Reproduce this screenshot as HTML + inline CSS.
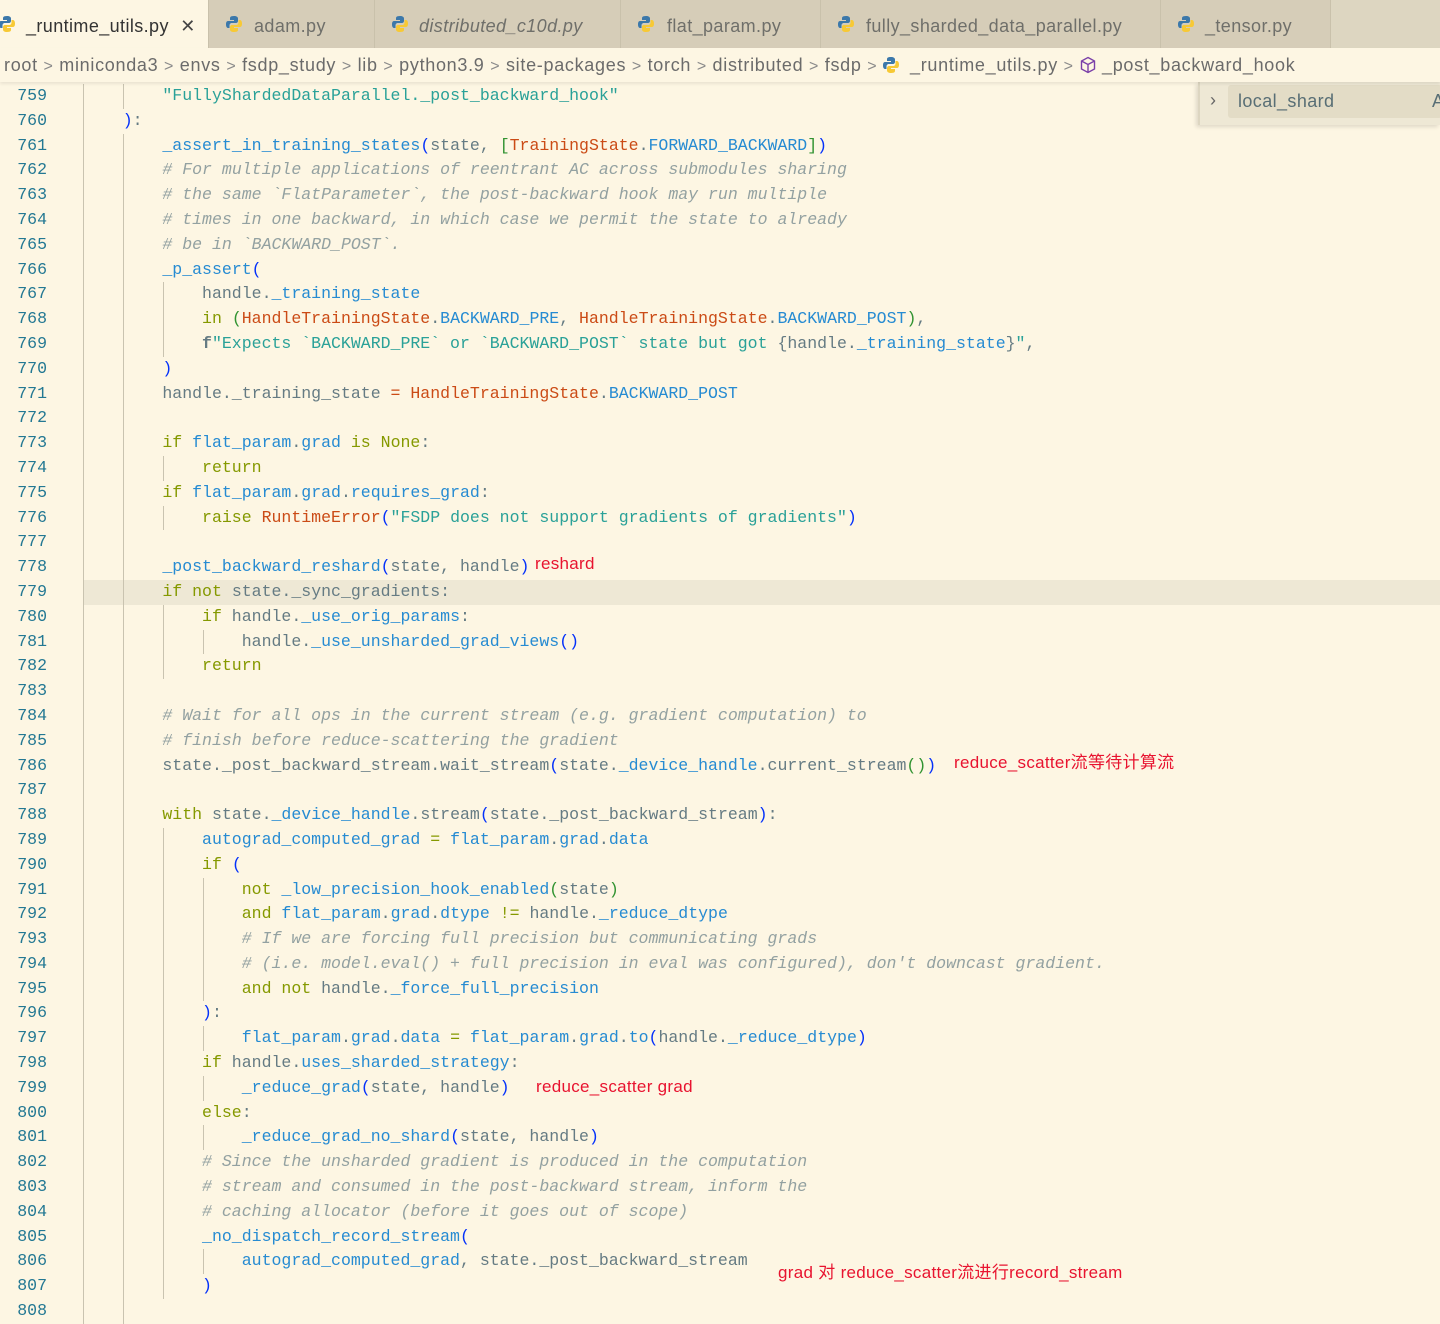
<!DOCTYPE html>
<html><head><meta charset="utf-8"><style>
*{margin:0;padding:0;box-sizing:border-box}
body{width:1440px;height:1308px;overflow:hidden;background:#fdf6e3;font-family:"Liberation Sans","Noto Sans CJK SC",sans-serif;position:relative}
.tabs{position:absolute;left:0;top:0;width:1440px;height:48px;background:#ddd6c1}
.tab{position:absolute;top:0;height:48px;background:#d6cdb8;border-right:1px solid #c9c1ab;font-size:18px;color:#6f6f6a;line-height:52px;padding-left:54px;letter-spacing:0.4px;white-space:nowrap}
.tab.act{background:#fdf6e3;color:#333;padding-left:26px}
.tab svg,.bc svg{position:absolute}
.it{font-style:italic}
.bc{position:absolute;left:0;top:48px;width:1440px;height:34px;background:#fdf6e3;box-shadow:0 2px 3px rgba(0,0,0,.08);font-size:18px;color:#6b6b6b;line-height:34px;white-space:pre;z-index:3;letter-spacing:0.7px}
.bc>span{position:absolute;top:0}
.sep{color:#8a8a8a;font-size:16px}
.code{position:absolute;left:0;top:84px;width:1440px;font-family:"Liberation Mono",monospace;font-size:16.55px;color:#657b83}
.l{height:24.8px;line-height:24.8px;white-space:pre;position:relative;padding-left:83px}
.n{position:absolute;left:0;width:47px;text-align:right;color:#237893}
.k{color:#859900}.f{color:#268bd2}.c{color:#cb4b16}.s{color:#2aa198}.m{color:#93a1a1;font-style:italic}
.b1{color:#0431fa}.b2{color:#319331}.b3{color:#7b3814}
.ann{position:absolute;font-family:"Liberation Sans","Noto Sans CJK SC",sans-serif;color:#e8132f;font-size:17px;white-space:nowrap;letter-spacing:0.3px}
.G1{background:linear-gradient(#c9c3b0,#c9c3b0) 83px 0/1px 100% no-repeat}
.G2{background:linear-gradient(#c9c3b0,#c9c3b0) 83px 0/1px 100% no-repeat,linear-gradient(#c9c3b0,#c9c3b0) 123px 0/1px 100% no-repeat}
.G3{background:linear-gradient(#c9c3b0,#c9c3b0) 83px 0/1px 100% no-repeat,linear-gradient(#c9c3b0,#c9c3b0) 123px 0/1px 100% no-repeat,linear-gradient(#c9c3b0,#c9c3b0) 163px 0/1px 100% no-repeat}
.G4{background:linear-gradient(#c9c3b0,#c9c3b0) 83px 0/1px 100% no-repeat,linear-gradient(#c9c3b0,#c9c3b0) 123px 0/1px 100% no-repeat,linear-gradient(#c9c3b0,#c9c3b0) 163px 0/1px 100% no-repeat,linear-gradient(#c9c3b0,#c9c3b0) 203px 0/1px 100% no-repeat}
.H{background:linear-gradient(#c9c3b0,#c9c3b0) 83px 0/1px 100% no-repeat,linear-gradient(#c9c3b0,#c9c3b0) 123px 0/1px 100% no-repeat,linear-gradient(#eee8d5,#eee8d5) 84px 0/100% 100% no-repeat}
</style></head><body>
<div class="tabs">
 <div class="tab act" style="left:0;width:209px;"><svg style="left:-2px;top:15px" width="18" height="18" viewBox="0 0 18 18"><path d="M9 1C5 1 5 2.5 5 3.5V5h4v1H3C1.5 6 1 7.5 1 9.5S1.8 13 3 13h1.5v-2.5C4.5 9 5.5 8 7 8h4c1.2 0 2-1 2-2V3.5C13 2 11.5 1 9 1z" fill="#3c78aa"/><path d="M9 17c4 0 4-1.5 4-2.5V13H9v-1h6c1.5 0 2-1.5 2-3.5S16.2 5 15 5h-1.5v2.5C13.5 9 12.5 10 11 10H7c-1.2 0-2 1-2 2v2.5C5 16 6.5 17 9 17z" fill="#f7c935"/></svg>_runtime_utils.py <span style="margin-left:6px;color:#444">✕</span></div>
 <div class="tab" style="left:209px;width:166px;padding-left:45px"><svg style="left:16px;top:15px" width="18" height="18" viewBox="0 0 18 18"><path d="M9 1C5 1 5 2.5 5 3.5V5h4v1H3C1.5 6 1 7.5 1 9.5S1.8 13 3 13h1.5v-2.5C4.5 9 5.5 8 7 8h4c1.2 0 2-1 2-2V3.5C13 2 11.5 1 9 1z" fill="#3c78aa"/><path d="M9 17c4 0 4-1.5 4-2.5V13H9v-1h6c1.5 0 2-1.5 2-3.5S16.2 5 15 5h-1.5v2.5C13.5 9 12.5 10 11 10H7c-1.2 0-2 1-2 2v2.5C5 16 6.5 17 9 17z" fill="#f7c935"/></svg>adam.py</div>
 <div class="tab it" style="left:375px;width:246px;padding-left:44px"><svg style="left:16px;top:15px" width="18" height="18" viewBox="0 0 18 18"><path d="M9 1C5 1 5 2.5 5 3.5V5h4v1H3C1.5 6 1 7.5 1 9.5S1.8 13 3 13h1.5v-2.5C4.5 9 5.5 8 7 8h4c1.2 0 2-1 2-2V3.5C13 2 11.5 1 9 1z" fill="#3c78aa"/><path d="M9 17c4 0 4-1.5 4-2.5V13H9v-1h6c1.5 0 2-1.5 2-3.5S16.2 5 15 5h-1.5v2.5C13.5 9 12.5 10 11 10H7c-1.2 0-2 1-2 2v2.5C5 16 6.5 17 9 17z" fill="#f7c935"/></svg>distributed_c10d.py</div>
 <div class="tab" style="left:621px;width:200px;padding-left:46px"><svg style="left:16px;top:15px" width="18" height="18" viewBox="0 0 18 18"><path d="M9 1C5 1 5 2.5 5 3.5V5h4v1H3C1.5 6 1 7.5 1 9.5S1.8 13 3 13h1.5v-2.5C4.5 9 5.5 8 7 8h4c1.2 0 2-1 2-2V3.5C13 2 11.5 1 9 1z" fill="#3c78aa"/><path d="M9 17c4 0 4-1.5 4-2.5V13H9v-1h6c1.5 0 2-1.5 2-3.5S16.2 5 15 5h-1.5v2.5C13.5 9 12.5 10 11 10H7c-1.2 0-2 1-2 2v2.5C5 16 6.5 17 9 17z" fill="#f7c935"/></svg>flat_param.py</div>
 <div class="tab" style="left:821px;width:340px;padding-left:45px"><svg style="left:16px;top:15px" width="18" height="18" viewBox="0 0 18 18"><path d="M9 1C5 1 5 2.5 5 3.5V5h4v1H3C1.5 6 1 7.5 1 9.5S1.8 13 3 13h1.5v-2.5C4.5 9 5.5 8 7 8h4c1.2 0 2-1 2-2V3.5C13 2 11.5 1 9 1z" fill="#3c78aa"/><path d="M9 17c4 0 4-1.5 4-2.5V13H9v-1h6c1.5 0 2-1.5 2-3.5S16.2 5 15 5h-1.5v2.5C13.5 9 12.5 10 11 10H7c-1.2 0-2 1-2 2v2.5C5 16 6.5 17 9 17z" fill="#f7c935"/></svg>fully_sharded_data_parallel.py</div>
 <div class="tab" style="left:1161px;width:170px;padding-left:44px"><svg style="left:16px;top:15px" width="18" height="18" viewBox="0 0 18 18"><path d="M9 1C5 1 5 2.5 5 3.5V5h4v1H3C1.5 6 1 7.5 1 9.5S1.8 13 3 13h1.5v-2.5C4.5 9 5.5 8 7 8h4c1.2 0 2-1 2-2V3.5C13 2 11.5 1 9 1z" fill="#3c78aa"/><path d="M9 17c4 0 4-1.5 4-2.5V13H9v-1h6c1.5 0 2-1.5 2-3.5S16.2 5 15 5h-1.5v2.5C13.5 9 12.5 10 11 10H7c-1.2 0-2 1-2 2v2.5C5 16 6.5 17 9 17z" fill="#f7c935"/></svg>_tensor.py</div>
</div>
<div class="bc"><span style="left:4px">root <span class="sep">&gt;</span> miniconda3 <span class="sep">&gt;</span> envs <span class="sep">&gt;</span> fsdp_study <span class="sep">&gt;</span> lib <span class="sep">&gt;</span> python3.9 <span class="sep">&gt;</span> site-packages <span class="sep">&gt;</span> torch <span class="sep">&gt;</span> distributed <span class="sep">&gt;</span> fsdp <span class="sep">&gt;</span></span>
<svg style="left:882px;top:8px" width="18" height="18" viewBox="0 0 18 18"><path d="M9 1C5 1 5 2.5 5 3.5V5h4v1H3C1.5 6 1 7.5 1 9.5S1.8 13 3 13h1.5v-2.5C4.5 9 5.5 8 7 8h4c1.2 0 2-1 2-2V3.5C13 2 11.5 1 9 1z" fill="#3c78aa"/><path d="M9 17c4 0 4-1.5 4-2.5V13H9v-1h6c1.5 0 2-1.5 2-3.5S16.2 5 15 5h-1.5v2.5C13.5 9 12.5 10 11 10H7c-1.2 0-2 1-2 2v2.5C5 16 6.5 17 9 17z" fill="#f7c935"/></svg>
<span style="left:910px">_runtime_utils.py <span class="sep">&gt;</span></span>
<svg style="left:1079px;top:8px" width="18" height="18" viewBox="0 0 18 18"><path d="M9 1.5L15.5 5v8L9 16.5 2.5 13V5z M2.5 5L9 8.5 15.5 5 M9 8.5v8" fill="none" stroke="#7a3fa8" stroke-width="1.4"/></svg>
<span style="left:1102px">_post_backward_hook</span></div>
<div style="position:absolute;left:1198px;top:82px;width:242px;height:43px;background:#eee8d5;box-shadow:-2px 2px 4px rgba(0,0,0,.12);z-index:2;border-left:2px solid #ddd6c1">
 <span style="position:absolute;left:10px;top:8px;font-size:18px;color:#666">›</span>
 <div style="position:absolute;left:28px;top:3px;width:214px;height:33px;background:#e3dcc6;border-radius:3px;font-size:18px;color:#586e75;line-height:33px;padding-left:10px;letter-spacing:0.4px">local_shard<span style="position:absolute;left:204px">A</span></div>
</div>
<div class="code">
<div class="l G2"><span class="n">759</span>        <span class="s">"FullyShardedDataParallel._post_backward_hook"</span></div>
<div class="l G1"><span class="n">760</span>    <span class="b1">)</span>:</div>
<div class="l G2"><span class="n">761</span>        <span class="f">_assert_in_training_states</span><span class="b1">(</span>state, <span class="b2">[</span><span class="c">TrainingState</span>.<span class="f">FORWARD_BACKWARD</span><span class="b2">]</span><span class="b1">)</span></div>
<div class="l G2"><span class="n">762</span>        <span class="m"># For multiple applications of reentrant AC across submodules sharing</span></div>
<div class="l G2"><span class="n">763</span>        <span class="m"># the same `FlatParameter`, the post-backward hook may run multiple</span></div>
<div class="l G2"><span class="n">764</span>        <span class="m"># times in one backward, in which case we permit the state to already</span></div>
<div class="l G2"><span class="n">765</span>        <span class="m"># be in `BACKWARD_POST`.</span></div>
<div class="l G2"><span class="n">766</span>        <span class="f">_p_assert</span><span class="b1">(</span></div>
<div class="l G3"><span class="n">767</span>            handle.<span class="f">_training_state</span></div>
<div class="l G3"><span class="n">768</span>            <span class="k">in</span> <span class="b2">(</span><span class="c">HandleTrainingState</span>.<span class="f">BACKWARD_PRE</span>, <span class="c">HandleTrainingState</span>.<span class="f">BACKWARD_POST</span><span class="b2">)</span>,</div>
<div class="l G3"><span class="n">769</span>            <b>f</b><span class="s">"Expects `BACKWARD_PRE` or `BACKWARD_POST` state but got </span>{handle.<span class="f">_training_state</span>}<span class="s">"</span>,</div>
<div class="l G2"><span class="n">770</span>        <span class="b1">)</span></div>
<div class="l G2"><span class="n">771</span>        handle._training_state <span class="c">=</span> <span class="c">HandleTrainingState</span>.<span class="f">BACKWARD_POST</span></div>
<div class="l G2"><span class="n">772</span></div>
<div class="l G2"><span class="n">773</span>        <span class="k">if</span> <span class="f">flat_param</span>.<span class="f">grad</span> <span class="k">is</span> <span class="k">None</span>:</div>
<div class="l G3"><span class="n">774</span>            <span class="k">return</span></div>
<div class="l G2"><span class="n">775</span>        <span class="k">if</span> <span class="f">flat_param</span>.<span class="f">grad</span>.<span class="f">requires_grad</span>:</div>
<div class="l G3"><span class="n">776</span>            <span class="k">raise</span> <span class="c">RuntimeError</span><span class="b1">(</span><span class="s">"FSDP does not support gradients of gradients"</span><span class="b1">)</span></div>
<div class="l G2"><span class="n">777</span></div>
<div class="l G2"><span class="n">778</span>        <span class="f">_post_backward_reshard</span><span class="b1">(</span>state, handle<span class="b1">)</span></div>
<div class="l H"><span class="n">779</span>        <span class="k">if</span> <span class="k">not</span> state._sync_gradients:</div>
<div class="l G3"><span class="n">780</span>            <span class="k">if</span> handle.<span class="f">_use_orig_params</span>:</div>
<div class="l G4"><span class="n">781</span>                handle.<span class="f">_use_unsharded_grad_views</span><span class="b1">()</span></div>
<div class="l G3"><span class="n">782</span>            <span class="k">return</span></div>
<div class="l G2"><span class="n">783</span></div>
<div class="l G2"><span class="n">784</span>        <span class="m"># Wait for all ops in the current stream (e.g. gradient computation) to</span></div>
<div class="l G2"><span class="n">785</span>        <span class="m"># finish before reduce-scattering the gradient</span></div>
<div class="l G2"><span class="n">786</span>        state._post_backward_stream.wait_stream<span class="b1">(</span>state.<span class="f">_device_handle</span>.current_stream<span class="b2">()</span><span class="b1">)</span></div>
<div class="l G2"><span class="n">787</span></div>
<div class="l G2"><span class="n">788</span>        <span class="k">with</span> state.<span class="f">_device_handle</span>.stream<span class="b1">(</span>state._post_backward_stream<span class="b1">)</span>:</div>
<div class="l G3"><span class="n">789</span>            <span class="f">autograd_computed_grad</span> <span class="k">=</span> <span class="f">flat_param</span>.<span class="f">grad</span>.<span class="f">data</span></div>
<div class="l G3"><span class="n">790</span>            <span class="k">if</span> <span class="b1">(</span></div>
<div class="l G4"><span class="n">791</span>                <span class="k">not</span> <span class="f">_low_precision_hook_enabled</span><span class="b2">(</span>state<span class="b2">)</span></div>
<div class="l G4"><span class="n">792</span>                <span class="k">and</span> <span class="f">flat_param</span>.<span class="f">grad</span>.<span class="f">dtype</span> <span class="k">!=</span> handle.<span class="f">_reduce_dtype</span></div>
<div class="l G4"><span class="n">793</span>                <span class="m"># If we are forcing full precision but communicating grads</span></div>
<div class="l G4"><span class="n">794</span>                <span class="m"># (i.e. model.eval() + full precision in eval was configured), don't downcast gradient.</span></div>
<div class="l G4"><span class="n">795</span>                <span class="k">and</span> <span class="k">not</span> handle.<span class="f">_force_full_precision</span></div>
<div class="l G3"><span class="n">796</span>            <span class="b1">)</span>:</div>
<div class="l G4"><span class="n">797</span>                <span class="f">flat_param</span>.<span class="f">grad</span>.<span class="f">data</span> <span class="k">=</span> <span class="f">flat_param</span>.<span class="f">grad</span>.<span class="f">to</span><span class="b1">(</span>handle.<span class="f">_reduce_dtype</span><span class="b1">)</span></div>
<div class="l G3"><span class="n">798</span>            <span class="k">if</span> handle.<span class="f">uses_sharded_strategy</span>:</div>
<div class="l G4"><span class="n">799</span>                <span class="f">_reduce_grad</span><span class="b1">(</span>state, handle<span class="b1">)</span></div>
<div class="l G3"><span class="n">800</span>            <span class="k">else</span>:</div>
<div class="l G4"><span class="n">801</span>                <span class="f">_reduce_grad_no_shard</span><span class="b1">(</span>state, handle<span class="b1">)</span></div>
<div class="l G3"><span class="n">802</span>            <span class="m"># Since the unsharded gradient is produced in the computation</span></div>
<div class="l G3"><span class="n">803</span>            <span class="m"># stream and consumed in the post-backward stream, inform the</span></div>
<div class="l G3"><span class="n">804</span>            <span class="m"># caching allocator (before it goes out of scope)</span></div>
<div class="l G3"><span class="n">805</span>            <span class="f">_no_dispatch_record_stream</span><span class="b1">(</span></div>
<div class="l G4"><span class="n">806</span>                <span class="f">autograd_computed_grad</span>, state._post_backward_stream</div>
<div class="l G3"><span class="n">807</span>            <span class="b1">)</span></div>
<div class="l G2"><span class="n">808</span></div>
</div>
<div class="ann" style="left:535px;top:554px">reshard</div>
<div class="ann" style="left:954px;top:748px">reduce_scatter流等待计算流</div>
<div class="ann" style="left:536px;top:1077px">reduce_scatter grad</div>
<div class="ann" style="left:778px;top:1258px">grad 对 reduce_scatter流进行record_stream</div>
</body></html>
